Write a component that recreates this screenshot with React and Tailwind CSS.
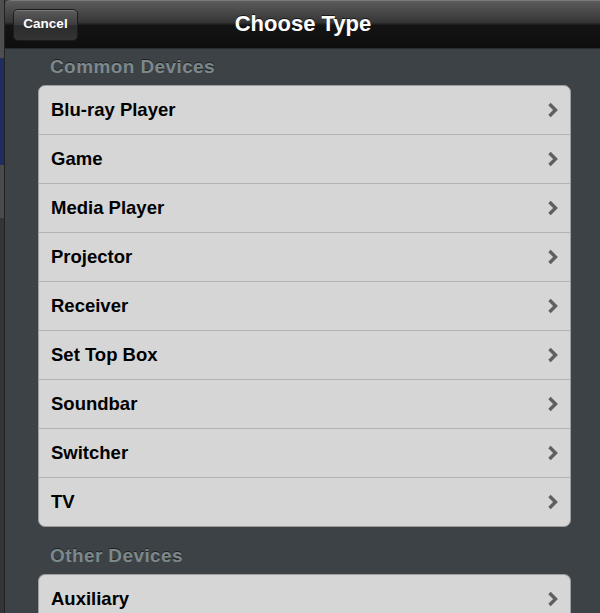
import React from "react";

const common = [
  "Blu-ray Player",
  "Game",
  "Media Player",
  "Projector",
  "Receiver",
  "Set Top Box",
  "Soundbar",
  "Switcher",
  "TV",
];
const other = ["Auxiliary"];

function Chevron() {
  return (
    <svg width="12" height="16" viewBox="0 0 12 16" className="shrink-0">
      <path d="M2.5 2 L8.5 8 L2.5 14" fill="none" stroke="#5f5f5f" strokeWidth="3.4" strokeLinejoin="miter" />
    </svg>
  );
}

function Row({ label, last }) {
  return (
    <div
      className={
        "flex items-center justify-between pl-[12px] pr-[11px] " +
        (last ? "h-[48px]" : "h-[49px] border-b border-[#b3b3b3]")
      }
    >
      <span className="text-[18.5px] font-bold text-black">{label}</span>
      <Chevron />
    </div>
  );
}

function Header({ children }) {
  return (
    <div
      className="pl-[12px] text-[19px] font-bold tracking-[0.4px] text-[#7c898c]"
      style={{ textShadow: "0 -1px 0 rgba(0,0,0,0.5)" }}
    >
      {children}
    </div>
  );
}

export default function App() {
  return (
    <div
      className="flex h-[613px] w-[600px] overflow-hidden bg-[#3d4246]"
      style={{ fontFamily: '"Liberation Sans", Arial, sans-serif' }}
    >
      <div className="flex w-[4px] shrink-0 flex-col">
        <div className="h-[58px] bg-[#4e4e4e]" />
        <div className="h-[107px] bg-[#1f2d5e]" />
        <div className="h-[53px] bg-[#4b4b4b]" />
        <div className="flex-1 bg-[#333537]" />
      </div>
      <div className="flex w-[1px] shrink-0 bg-[#222]" />
      <div className="flex min-w-0 flex-1 flex-col">
        <div className="relative h-[48px] shrink-0 rounded-tl-[6px] border-t border-[#7a7a7a] bg-[linear-gradient(to_bottom,#5b5b5b_0%,#363636_45%,#141414_52%,#0e0e0e_100%)]">
          <div className="flex h-full items-center pl-[8px]">
            <button className="flex h-[32px] w-[65px] items-center justify-center rounded-[5px] border border-[#1c1c1c] bg-[linear-gradient(to_bottom,#5c5c5c_0%,#3c3c3c_50%,#2c2c2c_52%,#333_100%)] text-[13.5px] font-bold text-white shadow-[inset_0_1px_0_rgba(255,255,255,0.2)]">
              Cancel
            </button>
          </div>
          <div className="absolute inset-0 flex items-center justify-center pl-[1px] pb-[2px]">
            <span
              className="text-[22px] font-bold text-white"
              style={{ textShadow: "0 -1px 0 rgba(0,0,0,0.6)" }}
            >
              Choose Type
            </span>
          </div>
        </div>
        <div className="h-[1px] shrink-0 bg-[#2a2d30]" />
        <div className="flex flex-col pl-[33px] pr-[29px]">
          <div className="flex h-[36px] items-center pt-[1px]">
            <Header>Common Devices</Header>
          </div>
          <div className="overflow-hidden rounded-[7px] border border-[#9d9d9d] bg-[#d6d6d6]">
            {common.map((c, i) => (
              <Row key={c} label={c} last={i === common.length - 1} />
            ))}
          </div>
          <div className="flex h-[47px] items-center pt-[12px]">
            <Header>Other Devices</Header>
          </div>
          <div className="overflow-hidden rounded-t-[7px] border border-b-0 border-[#9d9d9d] bg-[#d6d6d6]">
            {other.map((c) => (
              <Row key={c} label={c} last={false} />
            ))}
          </div>
        </div>
      </div>
    </div>
  );
}
